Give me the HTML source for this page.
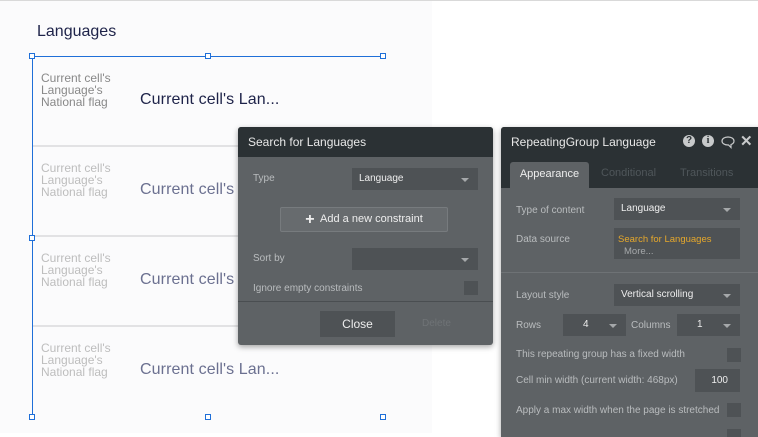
<!DOCTYPE html>
<html><head><meta charset="utf-8"><style>
*{box-sizing:border-box;margin:0;padding:0}
body{width:758px;height:433px;overflow:hidden;background:#fff;position:relative;font-family:"Liberation Sans",sans-serif}
.abs{position:absolute}
.canvas{left:0;top:1px;width:432px;height:432px;background:#fbfbfc}
.topline{left:0;top:0;width:758px;height:1px;background:#d9d9d9}
.sep{height:2px;background:#e2e2e4;left:33px;width:399px}
.flag{left:41px;font-size:12px;line-height:12px;color:#888}
.name{left:140px;font-size:16px;color:#1e2349;letter-spacing:0.1px}
.faded .flag{color:#bdbdbd}.faded .name{color:#6b7090}
.h{width:6px;height:6px;border:1px solid #1f6fd8;background:#fff}
.panel{background:#5e6265;border-radius:3px;box-shadow:0 2px 6px rgba(0,0,0,.35);overflow:hidden;color:#d4d6d7;font-size:10px}
.hdr{background:#2b3134;color:#e8e8e8;font-size:12px;height:30px;line-height:30px;padding-left:10px}
.lbl{color:#b9bcbe;font-size:10px}
.dd{background:#4e5255;color:#eee;font-size:10px;padding-left:7px}
.dd:after{content:"";position:absolute;right:9px;top:50%;margin-top:-1px;border:4px solid transparent;border-top:4px solid #a5a8aa;border-bottom:0}
.cb{width:14px;height:14px;background:#4e5255}
</style></head><body>
<div class="abs canvas"></div>
<div class="abs topline"></div>
<div class="abs" style="left:37px;top:23px;font-size:16px;color:#1e2349">Languages</div>
<div class="abs" style="left:32px;top:56px;width:352px;height:1px;background:#1f6fd8"></div>
<div class="abs" style="left:32px;top:56px;width:1px;height:361px;background:#1f6fd8"></div>
<div class="abs sep" style="top:145px"></div>
<div class="abs sep" style="top:235px"></div>
<div class="abs sep" style="top:325px"></div>
<div class="abs flag" style="top:72px">Current cell's<br>Language's<br>National flag</div>
<div class="abs name" style="top:91px">Current cell's Lan...</div>
<div class="faded">
<div class="abs flag" style="top:162px">Current cell's<br>Language's<br>National flag</div>
<div class="abs name" style="top:181px">Current cell's Lan...</div>
<div class="abs flag" style="top:252px">Current cell's<br>Language's<br>National flag</div>
<div class="abs name" style="top:271px">Current cell's Lan...</div>
<div class="abs flag" style="top:342px">Current cell's<br>Language's<br>National flag</div>
<div class="abs name" style="top:361px">Current cell's Lan...</div>
</div>
<div class="abs h" style="left:29px;top:53px"></div>
<div class="abs h" style="left:205px;top:53px"></div>
<div class="abs h" style="left:380px;top:53px"></div>
<div class="abs h" style="left:29px;top:235px"></div>
<div class="abs h" style="left:29px;top:414px"></div>
<div class="abs h" style="left:205px;top:414px"></div>
<div class="abs h" style="left:380px;top:414px"></div>

<div class="abs panel" style="left:238px;top:127px;width:255px;height:218px">
 <div class="hdr">Search for Languages</div>
 <div class="abs lbl" style="left:15px;top:46px">Type</div>
 <div class="abs dd" style="left:114px;top:41px;width:126px;height:22px;line-height:22px">Language</div>
 <div class="abs" style="left:42px;top:80px;width:168px;height:25px;background:#676b6e;border:1px solid #777b7e;border-radius:2px;color:#eee;font-size:11px;line-height:23px;text-align:center"><span style="font-size:16px;vertical-align:-2px;font-weight:bold">+</span>&nbsp; Add a new constraint</div>
 <div class="abs lbl" style="left:15px;top:126px">Sort by</div>
 <div class="abs dd" style="left:114px;top:121px;width:126px;height:22px"></div>
 <div class="abs lbl" style="left:15px;top:156px">Ignore empty constraints</div>
 <div class="abs cb" style="left:226px;top:154px"></div>
 <div class="abs" style="left:0;top:174px;width:255px;height:1px;background:#4a4e51"></div>
 <div class="abs" style="left:82px;top:184px;width:75px;height:26px;background:#4e5255;color:#eee;font-size:12px;line-height:26px;text-align:center">Close</div>
 <div class="abs" style="left:184px;top:191px;color:#6f7376;font-size:10px">Delete</div>
</div>

<div class="abs panel" style="left:501px;top:127px;width:262px;height:310px;border-radius:3px 0 0 0">
 <div class="hdr" style="height:61px;line-height:30px">RepeatingGroup Language</div>
 <div class="abs" style="left:182px;top:8px;width:12px;height:12px;border-radius:50%;background:#c8cacb;color:#2b3134;font-size:10px;font-weight:bold;text-align:center;line-height:12px">?</div>
 <div class="abs" style="left:201px;top:8px;width:12px;height:12px;border-radius:50%;background:#c8cacb;color:#2b3134;font-size:10px;font-weight:bold;text-align:center;line-height:12px;font-family:'Liberation Serif',serif">i</div>
 <svg class="abs" style="left:219px;top:8px" width="16" height="14" viewBox="0 0 16 14"><path d="M8 2C4.5 2 2 3.8 2 6s2.5 4 6 4h.5L11 12.5V9.6C12.8 8.9 14 7.6 14 6c0-2.2-2.5-4-6-4z" fill="none" stroke="#c8cacb" stroke-width="1.2"/></svg>
 <div class="abs" style="left:239px;top:5px;color:#c8cacb;font-size:15px;font-weight:bold">✕</div>
 <div class="abs" style="left:9px;top:35px;width:79px;height:26px;background:#5e6265;border-radius:3px 3px 0 0;color:#eee;font-size:11px;line-height:24px;text-align:center">Appearance</div>
 <div class="abs" style="left:100px;top:40px;color:#4f565a;font-size:11px">Conditional</div>
 <div class="abs" style="left:179px;top:40px;color:#4f565a;font-size:11px">Transitions</div>
 <div class="abs lbl" style="left:15px;top:78px">Type of content</div>
 <div class="abs dd" style="left:113px;top:71px;width:126px;height:22px;line-height:22px">Language</div>
 <div class="abs lbl" style="left:15px;top:107px">Data source</div>
 <div class="abs" style="left:113px;top:101px;width:126px;height:31px;background:#4e5255;font-size:9.5px;padding:6px 0 0 4px;color:#e6a82c;line-height:12px">Search for Languages<br><span style="color:#a5a8aa;padding-left:6px">More...</span></div>
 <div class="abs" style="left:0;top:145px;width:262px;height:1px;background:#6e7275"></div>
 <div class="abs lbl" style="left:15px;top:163px">Layout style</div>
 <div class="abs dd" style="left:113px;top:157px;width:126px;height:22px;line-height:22px">Vertical scrolling</div>
 <div class="abs lbl" style="left:15px;top:193px">Rows</div>
 <div class="abs dd" style="left:62px;top:187px;width:63px;height:22px;line-height:22px;padding-left:20px">4</div>
 <div class="abs lbl" style="left:130px;top:193px">Columns</div>
 <div class="abs dd" style="left:176px;top:187px;width:63px;height:22px;line-height:22px;padding-left:20px">1</div>
 <div class="abs lbl" style="left:15px;top:222px">This repeating group has a fixed width</div>
 <div class="abs cb" style="left:226px;top:221px"></div>
 <div class="abs lbl" style="left:15px;top:248px">Cell min width (current width: 468px)</div>
 <div class="abs" style="left:194px;top:242px;width:45px;height:23px;background:#4e5255;color:#eee;font-size:10px;line-height:23px;text-align:right;padding-right:12px">100</div>
 <div class="abs lbl" style="left:15px;top:278px">Apply a max width when the page is stretched</div>
 <div class="abs cb" style="left:226px;top:276px"></div>
 <div class="abs cb" style="left:226px;top:302px"></div>
</div>
</body></html>
